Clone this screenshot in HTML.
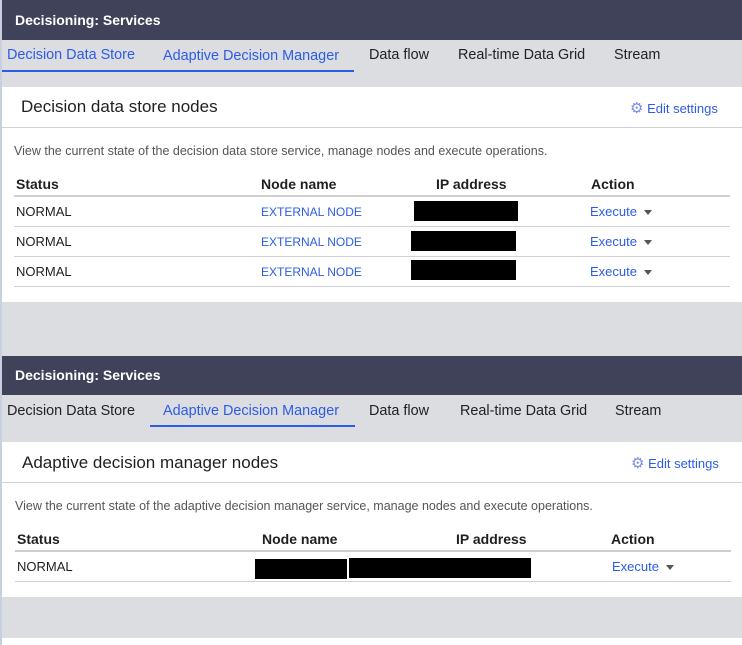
<!DOCTYPE html>
<html><head><style>
*{margin:0;padding:0;box-sizing:border-box}
body{width:742px;height:645px;position:relative;overflow:hidden;background:#fff;font-family:"Liberation Sans",sans-serif;color:#1f1f1f}
.a{position:absolute;white-space:nowrap}
.hd{background:#40425a;color:#fff;font-weight:bold;font-size:14px;padding-left:13px}
.tabs{background:#dcdde1}
.gray{background:#dcdde1}
.tab{font-size:14.4px;color:#222}
.blue{color:#2c5ce6}
.line{background:#d2d2d6;height:1px}
.th{font-weight:bold;font-size:14px}
.td{font-size:13px}
.lk{font-size:12px;color:#2c5ce6}
.blk{background:#000}
.ex{font-size:13px;color:#2c5ce6}
.ex:after{content:"";display:inline-block;margin-left:7px;border-left:4px solid transparent;border-right:4px solid transparent;border-top:5px solid #555;vertical-align:middle}
.es{font-size:13px;color:#2c5ce6}
.es span{font-size:15px;color:#7a8ae8}
</style></head><body>
<div class="a" style="left:0;top:0;width:2px;height:645px;background:#c8d0e0"></div>

<div class="a hd" style="left:2px;top:0;width:740px;height:40px;line-height:40px">Decisioning: Services</div>
<div class="a tabs" style="left:2px;top:40px;width:740px;height:47px"></div>
<div class="a tab blue" style="left:7px;top:47px">Decision Data Store</div>
<div class="a tab blue" style="left:163px;top:48px">Adaptive Decision Manager</div>
<div class="a tab" style="left:369px;top:47px">Data flow</div>
<div class="a tab" style="left:458px;top:47px">Real-time Data Grid</div>
<div class="a tab" style="left:614px;top:47px">Stream</div>
<div class="a" style="left:2px;top:70px;width:352px;height:2px;background:#2c5ce6"></div>

<div class="a" style="left:21px;top:97px;font-size:17px">Decision data store nodes</div>
<div class="a es" style="left:630px;top:99px"><span>⚙</span> Edit settings</div>
<div class="a line" style="left:2px;top:127px;width:740px"></div>
<div class="a" style="left:14px;top:144px;font-size:12.5px;color:#555">View the current state of the decision data store service, manage nodes and execute operations.</div>
<div class="a th" style="left:16px;top:176px">Status</div>
<div class="a th" style="left:261px;top:176px">Node name</div>
<div class="a th" style="left:436px;top:176px">IP address</div>
<div class="a th" style="left:591px;top:176px">Action</div>
<div class="a" style="left:14px;top:195px;width:716px;height:2px;background:#cfcfd2"></div>
<div class="a td" style="left:16px;top:204px">NORMAL</div>
<div class="a lk" style="left:261px;top:205px">EXTERNAL NODE</div>
<div class="a blk" style="left:414px;top:201px;width:104px;height:20px"></div>
<div class="a ex" style="left:590px;top:204px">Execute</div>
<div class="a line" style="left:14px;top:226px;width:716px"></div>
<div class="a td" style="left:16px;top:234px">NORMAL</div>
<div class="a lk" style="left:261px;top:235px">EXTERNAL NODE</div>
<div class="a blk" style="left:411px;top:231px;width:105px;height:20px"></div>
<div class="a ex" style="left:590px;top:234px">Execute</div>
<div class="a line" style="left:14px;top:256px;width:716px"></div>
<div class="a td" style="left:16px;top:264px">NORMAL</div>
<div class="a lk" style="left:261px;top:265px">EXTERNAL NODE</div>
<div class="a blk" style="left:411px;top:260px;width:105px;height:20px"></div>
<div class="a ex" style="left:590px;top:264px">Execute</div>
<div class="a line" style="left:14px;top:286px;width:716px"></div>

<div class="a gray" style="left:2px;top:302px;width:740px;height:54px"></div>

<div class="a hd" style="left:2px;top:356px;width:740px;height:39px;line-height:39px">Decisioning: Services</div>
<div class="a tabs" style="left:2px;top:395px;width:740px;height:47px"></div>
<div class="a tab" style="left:7px;top:403px">Decision Data Store</div>
<div class="a tab blue" style="left:163px;top:403px">Adaptive Decision Manager</div>
<div class="a tab" style="left:369px;top:403px">Data flow</div>
<div class="a tab" style="left:460px;top:403px">Real-time Data Grid</div>
<div class="a tab" style="left:615px;top:403px">Stream</div>
<div class="a" style="left:150px;top:425px;width:205px;height:2px;background:#2c5ce6"></div>

<div class="a" style="left:22px;top:453px;font-size:17px">Adaptive decision manager nodes</div>
<div class="a es" style="left:631px;top:454px"><span>⚙</span> Edit settings</div>
<div class="a line" style="left:2px;top:482px;width:740px"></div>
<div class="a" style="left:15px;top:499px;font-size:12.5px;color:#555">View the current state of the adaptive decision manager service, manage nodes and execute operations.</div>
<div class="a th" style="left:17px;top:531px">Status</div>
<div class="a th" style="left:262px;top:531px">Node name</div>
<div class="a th" style="left:456px;top:531px">IP address</div>
<div class="a th" style="left:611px;top:531px">Action</div>
<div class="a" style="left:15px;top:550px;width:716px;height:2px;background:#cfcfd2"></div>
<div class="a td" style="left:17px;top:559px">NORMAL</div>
<div class="a blk" style="left:255px;top:559px;width:92px;height:20px"></div>
<div class="a blk" style="left:349px;top:558px;width:182px;height:20px"></div>
<div class="a ex" style="left:612px;top:559px">Execute</div>
<div class="a line" style="left:15px;top:581px;width:716px"></div>

<div class="a gray" style="left:2px;top:597px;width:740px;height:41px"></div>
</body></html>
